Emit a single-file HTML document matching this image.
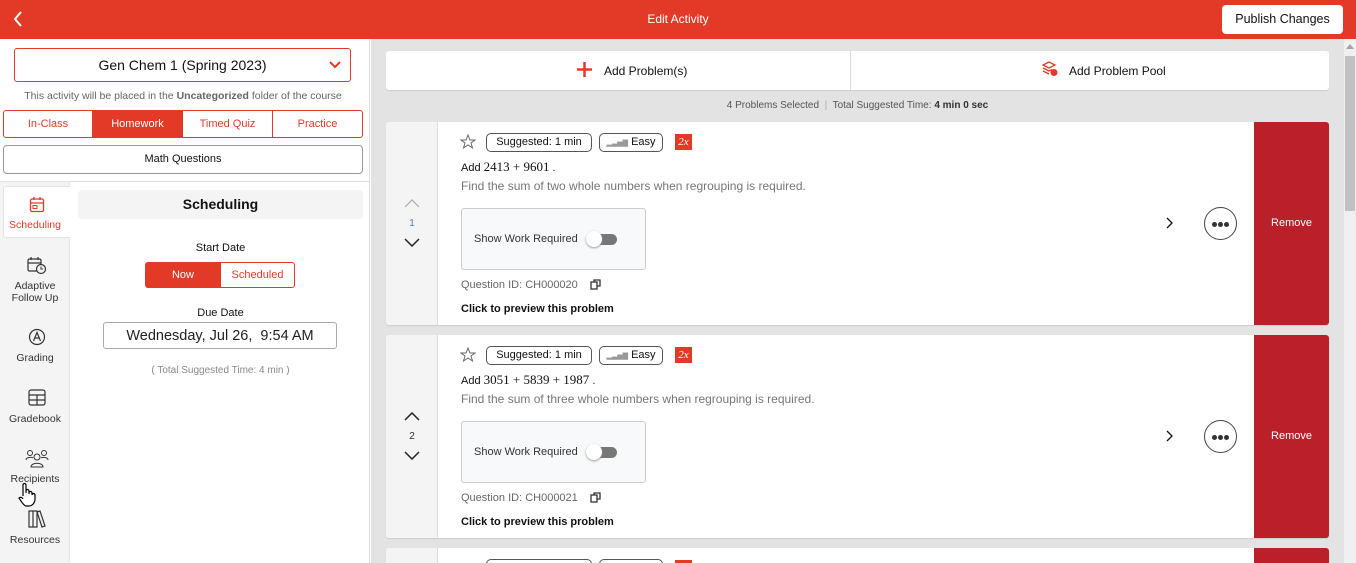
<!DOCTYPE html>
<html style="height:563px;overflow:hidden"><head><meta charset="utf-8"><style>
*{box-sizing:border-box;margin:0;padding:0}
body{width:1356px;height:563px;overflow:hidden;font-family:"Liberation Sans",Arial,sans-serif;background:#fff;position:relative;color:#222}
.abs{position:absolute}
.hdr{left:0;top:0;width:1356px;height:39px;background:#e33a27}
.hdr .t{left:0;width:1356px;top:12px;text-align:center;color:#fff;font-size:12px}
.pub{left:1222px;top:5px;width:121px;height:29px;background:#fff;border-radius:4px;font-size:12.5px;text-align:center;line-height:29px;color:#111}
.left{left:0;top:39px;width:370px;height:524px;background:#fff;border-right:1px solid #ddd}
.sel{left:14px;top:48px;width:337px;height:34px;border:1px solid #e33a27;border-radius:3px;text-align:center;line-height:33px;font-size:14px;color:#111}
.seg{top:110px;height:28px;border:1px solid #e33a27;font-size:11px;color:#e33a27;text-align:center;line-height:26px}
.tabs{left:0;top:181px;width:70px;height:382px;background:#f5f4f4;border-right:1px solid #e4e4e4;border-top:1px solid #e4e4e4}
.tab{left:0;width:70px;text-align:center;font-size:10.5px;color:#333;line-height:12px}
.right{left:371px;top:39px;width:973px;height:524px;background:#e3e3e3}
.sb{left:1344px;top:39px;width:12px;height:524px;background:#f0f0f0}
.card{left:386px;width:943px;height:203px;background:#fff;border-radius:3px;box-shadow:0 1px 1px #ccc;overflow:hidden}
.card .lc{left:0;top:0;width:52px;height:100%;background:#f4f4f4;border-right:1px solid #ddd}
.card .rm{left:868px;top:0;width:75px;height:100%;background:#b92029;color:#fff;font-size:11px;text-align:center}
.pill{top:11px;height:19px;border:1px solid #555;border-radius:5px;font-size:11px;line-height:17px;text-align:center;color:#111}
.box{left:75px;top:86px;width:185px;height:62px;background:#f8f9fa;border:1px solid #ccc;border-radius:3px}
.dots{left:818px;top:85px;width:33px;height:33px;border:1px solid #444;border-radius:50%}
.dots i{position:absolute;top:14px;width:5px;height:5px;border-radius:50%;background:#333}
</style></head><body>
<div class="abs hdr"><div class="abs t">Edit Activity</div>
<svg class="abs" style="left:12px;top:10px" width="12" height="18"><path d="M9 2L3 9l6 7" stroke="#fff" stroke-width="2" fill="none"/></svg>
<div class="abs pub">Publish Changes</div></div>

<div class="abs left"></div>
<div class="abs sel">Gen Chem 1 (Spring 2023)<svg class="abs" style="left:314px;top:12px" width="12" height="8"><path d="M1 1l5 5 5-5" stroke="#e33a27" stroke-width="2" fill="none"/></svg></div>
<div class="abs" style="left:0;width:366px;top:90px;text-align:center;font-size:10.5px;color:#666">This activity will be placed in the <b>Uncategorized</b> folder of the course</div>
<div class="abs seg" style="left:3px;width:90px;border-radius:3px 0 0 3px">In-Class</div>
<div class="abs seg" style="left:92px;width:91px;background:#e33a27;color:#fff">Homework</div>
<div class="abs seg" style="left:182px;width:91px">Timed Quiz</div>
<div class="abs seg" style="left:272px;width:91px;border-radius:0 3px 3px 0">Practice</div>
<div class="abs" style="left:3px;top:145px;width:360px;height:29px;border:1px solid #999;border-radius:4px;text-align:center;line-height:27px;font-size:11px;color:#111">Math Questions</div>
<div class="abs" style="left:0;top:181px;width:370px;border-top:1px solid #ddd"></div>
<div class="abs tabs"></div>
<div class="abs" style="left:3px;top:186px;width:67px;height:52px;background:#fff;border:1px solid #e4e4e4;border-right:none;border-radius:3px 0 0 3px"></div>
<svg class="abs" style="left:29px;top:196px" width="16" height="17"><rect x="1.5" y="3" width="13" height="12.5" rx="1.5" stroke="#e33a27" fill="none" stroke-width="1.3"/><path d="M1.5 7h13M5 1v3M11 1v3" stroke="#e33a27" stroke-width="1.3"/><rect x="4" y="9.5" width="4" height="3" stroke="#e33a27" fill="none"/></svg>
<div class="abs tab" style="top:219px;color:#e33a27">Scheduling</div>
<svg class="abs" style="left:27px;top:256px" width="20" height="19"><rect x="1" y="3" width="13" height="12" rx="1.5" stroke="#333" fill="none" stroke-width="1.2"/><path d="M1 7h13M4 1v3M11 1v3" stroke="#333" stroke-width="1.2"/><circle cx="14" cy="13" r="4.5" fill="#f5f4f4" stroke="#333" stroke-width="1.2"/><path d="M14 10.5v2.5h2" stroke="#333" fill="none"/></svg>
<div class="abs tab" style="top:280px">Adaptive<br>Follow Up</div>
<svg class="abs" style="left:28px;top:328px" width="18" height="18"><circle cx="9" cy="9" r="7.5" stroke="#333" fill="none" stroke-width="1.2"/><path d="M5.5 13L9 4.5 12.5 13M6.8 10h4.4" stroke="#333" fill="none" stroke-width="1.2"/></svg>
<div class="abs tab" style="top:352px">Grading</div>
<svg class="abs" style="left:28px;top:389px" width="18" height="17"><rect x="1" y="1" width="16" height="15" rx="2" stroke="#333" fill="none" stroke-width="1.2"/><path d="M1 6h16M1 11h16M9 6v10" stroke="#333" stroke-width="1.2"/></svg>
<div class="abs tab" style="top:413px">Gradebook</div>
<svg class="abs" style="left:25px;top:449px" width="24" height="19"><circle cx="5" cy="4" r="2.5" stroke="#333" fill="none"/><circle cx="19" cy="4" r="2.5" stroke="#333" fill="none"/><circle cx="12" cy="8" r="3" stroke="#333" fill="none"/><path d="M1 11c0-3 6-3 7-2M23 11c0-3-6-3-7-2M6 18c0-5 12-5 12 0z" stroke="#333" fill="none"/></svg>
<div class="abs tab" style="top:473px">Recipients</div>
<svg class="abs" style="left:17px;top:482px" width="20" height="26"><path d="M6 14V3a1.5 1.5 0 013 0v8M9 11V9a1.5 1.5 0 013 0v3M12 12v-1a1.5 1.5 0 013 0v2M15 13a1.5 1.5 0 013 0v4c0 4-3 7-6 7H9c-2 0-5-5-7-8 1-1 3-1 4 1" fill="#fff" stroke="#000" stroke-width="1.2"/></svg>
<svg class="abs" style="left:27px;top:510px" width="20" height="18"><path d="M2 1h4v16H2zM6 1h4v16H6zM10 2l3-1 5 15-3 1z" stroke="#333" fill="none" stroke-width="1.2"/></svg>
<div class="abs tab" style="top:534px">Resources</div>

<div class="abs" style="left:78px;top:190px;width:285px;height:29px;background:#f5f4f4;border-radius:4px;text-align:center;line-height:29px;font-size:14px;font-weight:bold;color:#111">Scheduling</div>
<div class="abs" style="left:78px;width:285px;top:242px;text-align:center;font-size:11px;color:#111">Start Date</div>
<div class="abs" style="left:145px;top:262px;width:76px;height:26px;background:#e33a27;border-radius:3px 0 0 3px;color:#fff;font-size:11px;text-align:center;line-height:26px">Now</div>
<div class="abs" style="left:220px;top:262px;width:75px;height:26px;border:1px solid #e33a27;border-radius:0 3px 3px 0;color:#e33a27;font-size:11px;text-align:center;line-height:24px">Scheduled</div>
<div class="abs" style="left:78px;width:285px;top:307px;text-align:center;font-size:11px;color:#111">Due Date</div>
<div class="abs" style="left:103px;top:322px;width:234px;height:27px;border:1px solid #aaa;border-radius:3px;text-align:center;line-height:26px;font-size:14.5px;color:#222">Wednesday, Jul 26,&nbsp; 9:54 AM</div>
<div class="abs" style="left:78px;width:285px;top:365px;text-align:center;font-size:10px;color:#888">( Total Suggested Time: 4 min )</div>

<div class="abs right"></div>
<div class="abs sb"><div class="abs" style="left:1px;top:17px;width:10px;height:155px;background:#c1c1c1"></div><svg class="abs" style="left:2px;top:5px" width="8" height="5"><path d="M0 5L4 0 8 5z" fill="#a3a3a3"/></svg></div>
<div class="abs" style="left:386px;top:51px;width:943px;height:39px;background:#fff;border-radius:3px;box-shadow:0 1px 1px #ccc"></div>
<div class="abs" style="left:850px;top:51px;width:1px;height:39px;background:#ddd"></div>
<svg class="abs" style="left:577px;top:62px" width="15" height="15"><path d="M7.5 0v15M0 7.5h15" stroke="#e33a27" stroke-width="2.5"/></svg>
<div class="abs" style="left:604px;top:64px;font-size:12px;color:#111">Add Problem(s)</div>
<svg class="abs" style="left:1042px;top:61px" width="16" height="16"><path d="M7 1l6 3-6 3-6-3zM1 7l6 3 3-1.5M1 10l6 3" stroke="#e33a27" fill="none" stroke-width="1.3"/><circle cx="12" cy="11.5" r="3.5" fill="#e33a27"/></svg>
<div class="abs" style="left:1069px;top:64px;font-size:12px;color:#111">Add Problem Pool</div>
<div class="abs" style="left:386px;width:943px;top:100px;text-align:center;font-size:10px;color:#555">4 Problems Selected &nbsp;<span style="color:#aaa">|</span>&nbsp; Total Suggested Time: <b style="color:#333">4 min 0 sec</b></div>

<div class="abs card" style="top:122px">
<div class="abs lc"></div>
<svg class="abs" style="left:18px;top:77px" width="16" height="9"><path d="M1 8l7-7 7 7" stroke="#aaa" fill="none" stroke-width="1.2"/></svg>
<div class="abs" style="left:0;width:52px;top:96px;text-align:center;font-size:10px;color:#4a7fb5">1</div>
<svg class="abs" style="left:18px;top:116px" width="16" height="9"><path d="M1 1l7 7 7-7" stroke="#222" fill="none" stroke-width="1.5"/></svg>
<svg class="abs" style="left:74px;top:12px" width="16" height="16"><path d="M8 1l2 5h5l-4 3 1.5 5L8 11l-4.5 3L5 9 1 6h5z" stroke="#666" fill="none"/></svg>
<div class="abs pill" style="left:100px;width:106px">Suggested: 1 min</div>
<div class="abs pill" style="left:213px;width:64px"><span style="font-size:7px;color:#999">▂▃▅▇</span> Easy</div>
<div class="abs" style="left:289px;top:12px;width:17px;height:16px;background:#e33a27;color:#fff;font-family:'Liberation Serif',serif;font-size:11px;line-height:16px;text-align:center"><i>2x</i></div>
<div class="abs" style="left:75px;top:37px;font-size:11px;color:#111">Add <span style="font-family:'Liberation Serif',serif;font-size:13px">2413 + 9601</span> .</div>
<div class="abs" style="left:75px;top:57px;font-size:12px;color:#777">Find the sum of two whole numbers when regrouping is required.</div>
<div class="abs box"><div class="abs" style="left:12px;top:24px;font-size:11px;color:#333">Show Work Required</div><div class="abs" style="left:127px;top:25px;width:28px;height:11px;background:#777;border-radius:6px"></div><div class="abs" style="left:124px;top:22px;width:16px;height:16px;background:#fff;border-radius:50%;box-shadow:0 1px 2px #999"></div></div>
<div class="abs" style="left:75px;top:157px;font-size:11px;color:#666">Question ID: CH000020</div>
<svg class="abs" style="left:204px;top:157px" width="11" height="11"><rect x="1" y="3" width="6" height="7" stroke="#333" fill="none" stroke-width="1.3"/><path d="M4 3V1h6v6H7" stroke="#333" fill="none" stroke-width="1.3"/></svg>
<div class="abs" style="left:75px;top:181px;font-size:11px;font-weight:bold;color:#111">Click to preview this problem</div>
<svg class="abs" style="left:780px;top:95px" width="8" height="12"><path d="M1 1l5 5-5 5" stroke="#111" fill="none" stroke-width="1.3"/></svg>
<div class="abs dots"><i style="left:7px"></i><i style="left:13px"></i><i style="left:19px"></i></div>
<div class="abs rm" style="line-height:203px">Remove</div>
</div>

<div class="abs card" style="top:335px">
<div class="abs lc"></div>
<svg class="abs" style="left:18px;top:77px" width="16" height="9"><path d="M1 8l7-7 7 7" stroke="#222" fill="none" stroke-width="1.5"/></svg>
<div class="abs" style="left:0;width:52px;top:96px;text-align:center;font-size:10px;color:#333">2</div>
<svg class="abs" style="left:18px;top:116px" width="16" height="9"><path d="M1 1l7 7 7-7" stroke="#222" fill="none" stroke-width="1.5"/></svg>
<svg class="abs" style="left:74px;top:12px" width="16" height="16"><path d="M8 1l2 5h5l-4 3 1.5 5L8 11l-4.5 3L5 9 1 6h5z" stroke="#666" fill="none"/></svg>
<div class="abs pill" style="left:100px;width:106px">Suggested: 1 min</div>
<div class="abs pill" style="left:213px;width:64px"><span style="font-size:7px;color:#999">▂▃▅▇</span> Easy</div>
<div class="abs" style="left:289px;top:12px;width:17px;height:16px;background:#e33a27;color:#fff;font-family:'Liberation Serif',serif;font-size:11px;line-height:16px;text-align:center"><i>2x</i></div>
<div class="abs" style="left:75px;top:37px;font-size:11px;color:#111">Add <span style="font-family:'Liberation Serif',serif;font-size:13px">3051 + 5839 + 1987</span> .</div>
<div class="abs" style="left:75px;top:57px;font-size:12px;color:#777">Find the sum of three whole numbers when regrouping is required.</div>
<div class="abs box"><div class="abs" style="left:12px;top:24px;font-size:11px;color:#333">Show Work Required</div><div class="abs" style="left:127px;top:25px;width:28px;height:11px;background:#777;border-radius:6px"></div><div class="abs" style="left:124px;top:22px;width:16px;height:16px;background:#fff;border-radius:50%;box-shadow:0 1px 2px #999"></div></div>
<div class="abs" style="left:75px;top:157px;font-size:11px;color:#666">Question ID: CH000021</div>
<svg class="abs" style="left:204px;top:157px" width="11" height="11"><rect x="1" y="3" width="6" height="7" stroke="#333" fill="none" stroke-width="1.3"/><path d="M4 3V1h6v6H7" stroke="#333" fill="none" stroke-width="1.3"/></svg>
<div class="abs" style="left:75px;top:181px;font-size:11px;font-weight:bold;color:#111">Click to preview this problem</div>
<svg class="abs" style="left:780px;top:95px" width="8" height="12"><path d="M1 1l5 5-5 5" stroke="#111" fill="none" stroke-width="1.3"/></svg>
<div class="abs dots"><i style="left:7px"></i><i style="left:13px"></i><i style="left:19px"></i></div>
<div class="abs rm" style="line-height:203px">Remove</div>
</div>

<div class="abs card" style="top:548px;height:15px;border-radius:3px 3px 0 0">
<div class="abs lc"></div>
<div class="abs pill" style="left:100px;width:106px"></div>
<div class="abs pill" style="left:213px;width:64px"></div>
<div class="abs" style="left:289px;top:12px;width:17px;height:16px;background:#e33a27"></div>
<div class="abs rm"></div>
</div>
</body></html>
